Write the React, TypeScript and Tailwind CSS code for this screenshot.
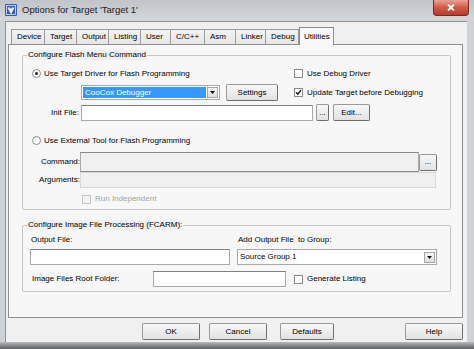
const tabs = [
  { name: "Device", w: "w-[34px]" },
  { name: "Target", w: "w-[32px]" },
  { name: "Output", w: "w-[32px]" },
  { name: "Listing", w: "w-[32px]" },
  { name: "User", w: "w-[30px]" },
  { name: "C/C++", w: "w-[34px]" },
  { name: "Asm", w: "w-[31px]" },
  { name: "Linker", w: "w-[30px]" },
  { name: "Debug", w: "w-[33px]" },
];

function CheckBox({ checked = false, disabled = false }: { checked?: boolean; disabled?: boolean }) {
  return (
    <span
      className={`flex h-[9px] w-[9px] shrink-0 items-center justify-center border ${
        disabled ? "border-[#c4c4c4] bg-[#f4f4f4]" : "border-[#8a8a8a] bg-white"
      }`}
    >
      {checked && (
        <svg width="7" height="7" viewBox="0 0 7 7">
          <path d="M1 3.2 L2.8 5.2 L6 1.2" fill="none" stroke="#1a1a1a" strokeWidth="1.4" />
        </svg>
      )}
    </span>
  );
}

function Radio({ checked = false }: { checked?: boolean }) {
  return (
    <span className="flex h-[9px] w-[9px] shrink-0 items-center justify-center rounded-full border border-[#8a8a8a] bg-white">
      {checked && <span className="h-[3px] w-[3px] rounded-full bg-[#222]" />}
    </span>
  );
}

function Button({ label, w, h = "h-[17px]" }: { label: string; w: string; h?: string }) {
  return (
    <div
      className={`${w} ${h} flex shrink-0 items-center justify-center rounded-[2px] border border-[#9a9a9a] border-b-[#6e6e6e] border-r-[#6e6e6e] bg-gradient-to-b from-[#f8f8f8] to-[#e2e2e2]`}
    >
      {label}
    </div>
  );
}

function ArrowBtn() {
  return (
    <div className="flex h-[11px] w-[11px] shrink-0 items-center justify-center border border-[#a8a8a8] bg-gradient-to-b from-[#f6f6f6] to-[#dedede]">
      <svg width="5" height="3" viewBox="0 0 5 3">
        <path d="M0 0 H5 L2.5 3 Z" fill="#111" />
      </svg>
    </div>
  );
}

function GroupBox({ title, h, children }: { title: string; h: string; children: React.ReactNode }) {
  return (
    <div className={`relative ${h} w-[429px] rounded-[2px] border border-[#c6c6c6]`}>
      <span className="absolute left-[4px] top-[-6px] bg-[#f0f0f0] px-[1px] leading-[10px]">{title}</span>
      {children}
    </div>
  );
}

export default function App() {
  return (
    <div
      className="flex h-[349px] w-[474px] flex-col overflow-hidden bg-[#cfd2d5] text-[8px] text-black"
      style={{ fontFamily: '"Liberation Sans", Arial, sans-serif' }}
    >
      {/* Title bar */}
      <div className="flex h-[21px] shrink-0 items-start bg-gradient-to-b from-[#c1c4c8] to-[#d4d7da] pl-[5px]">
        <div className="mt-[4px] flex h-[12px] w-[12px] items-center justify-center rounded-[1px] bg-[#2f5fb4]">
          <svg width="10" height="10" viewBox="0 0 10 10">
            <rect x="0.5" y="0.5" width="9" height="9" fill="none" stroke="#dfe8f7" strokeWidth="0.8" />
            <path d="M2 2.5 L5 8 L8 2.5 M3.5 2.5 L5 5.5 L6.5 2.5" fill="none" stroke="#fff" strokeWidth="1.1" />
          </svg>
        </div>
        <span className="ml-[5px] mt-[4px] text-[9.5px] leading-[12px] text-[#1c1c1c]">Options for Target 'Target 1'</span>
        <div className="ml-auto mr-[5px] flex h-[16px] w-[36px] items-center justify-center rounded-b-[4px] border border-t-0 border-[#7a2a22] bg-gradient-to-b from-[#e8a196] via-[#d05a48] to-[#b83a2a]">
          <svg width="8" height="7" viewBox="0 0 8 7">
            <path d="M1 0.5 L7 6.5 M7 0.5 L1 6.5" stroke="#fff" strokeWidth="1.8" />
          </svg>
        </div>
      </div>

      {/* Client area */}
      <div className="ml-[5px] mr-[7px] flex h-[321px] flex-col border-t border-l border-[#8f8f8f] bg-[#f0f0f0]">
        {/* Tabs */}
        <div className="mt-[5px] flex h-[17px] items-end pl-[5px]">
          {tabs.map((t, i) => (
            <div
              key={t.name}
              className={`${t.w} flex h-[15px] items-center border-t border-r border-[#9a9a9a] bg-gradient-to-b from-[#f2f2f2] to-[#e6e6e6] pl-[5px] ${
                i === 0 ? "border-l" : ""
              }`}
            >
              {t.name}
            </div>
          ))}
          <div className="relative z-10 mb-[-1px] flex h-[18px] w-[35px] items-start border-x border-t border-[#8a8a8a] bg-[#f8f8f8] pl-[4px] pt-[3px]">
            Utilities
          </div>
        </div>

        {/* Tab page */}
        <div className="ml-[2px] flex h-[274px] w-[455px] flex-col border border-[#8f8f8f] bg-[#f7f7f7] pl-[13px] pt-[10px]">
          <GroupBox title="Configure Flash Menu Command" h="h-[155px]">
            <div className="flex flex-col">
              <div className="mt-[12px] flex h-[11px] items-center pl-[9px]">
                <div className="flex w-[262px] items-center gap-[3px]">
                  <Radio checked />
                  <span>Use Target Driver for Flash Programming</span>
                </div>
                <div className="flex items-center gap-[4px]">
                  <CheckBox />
                  <span>Use Debug Driver</span>
                </div>
              </div>
              <div className="mt-[5px] flex h-[17px] items-center pl-[58px]">
                <div className="flex h-[15px] w-[139px] items-center border border-[#a9a9a9] bg-white pl-[1px] pr-[1px]">
                  <div className="flex h-[11px] flex-1 items-center bg-[#3399ff] pl-[2px] text-white">CooCox Debugger</div>
                  <div className="ml-[1px]">
                    <ArrowBtn />
                  </div>
                </div>
                <div className="ml-[6px]">
                  <Button label="Settings" w="w-[52px]" />
                </div>
                <div className="ml-[16px] flex items-center gap-[4px]">
                  <CheckBox checked />
                  <span>Update Target before Debugging</span>
                </div>
              </div>
              <div className="mt-[3px] flex h-[17px] items-center">
                <span className="w-[56px] text-right">Init File:</span>
                <div className="ml-[2px] h-[16px] w-[232px] border border-[#a9a9a9] border-t-[#7f7f7f] bg-white" />
                <div className="ml-[3px]">
                  <Button label="..." w="w-[13px]" />
                </div>
                <div className="ml-[4px]">
                  <Button label="Edit..." w="w-[37px]" />
                </div>
              </div>
              <div className="mt-[14px] flex h-[11px] items-center gap-[3px] pl-[9px]">
                <Radio />
                <span>Use External Tool for Flash Programming</span>
              </div>
              <div className="mt-[6px] flex h-[20px] items-center">
                <span className="w-[57px] text-right">Command:</span>
                <div className="h-[20px] w-[339px] border border-[#a9a9a9] border-t-[#8a8a8a] border-b-[#8a8a8a] bg-[#f0f0f0]" />
                <Button label="..." w="w-[18px]" />
              </div>
              <div className="flex h-[16px] items-center">
                <span className="w-[57px] text-right">Arguments:</span>
                <div className="h-[16px] w-[356px] border border-[#d8d8d8] bg-[#f0f0f0]" />
              </div>
              <div className="mt-[6px] flex h-[10px] items-center gap-[4px] pl-[59px] text-[#a3a3a3]">
                <CheckBox disabled />
                <span>Run Independent</span>
              </div>
            </div>
          </GroupBox>

          <div className="mt-[15px]">
            <GroupBox title="Configure Image File Processing (FCARM):" h="h-[67px]">
              <div className="flex flex-col">
                <div className="mt-[9px] flex h-[10px] items-center pl-[8px]">
                  <span className="w-[207px]">Output File:</span>
                  <span>Add Output File&nbsp; to Group:</span>
                </div>
                <div className="mt-[4px] flex h-[16px] items-center pl-[7px]">
                  <div className="h-[16px] w-[200px] border border-[#a9a9a9] border-t-[#7f7f7f] bg-white" />
                  <div className="ml-[7px] flex h-[16px] w-[200px] items-center border border-[#a9a9a9] bg-white pl-[2px] pr-[1px]">
                    <span className="flex-1">Source Group 1</span>
                    <ArrowBtn />
                  </div>
                </div>
                <div className="mt-[6px] flex h-[16px] items-center pl-[9px]">
                  <span className="w-[121px]">Image Files Root Folder:</span>
                  <div className="h-[16px] w-[133px] border border-[#a9a9a9] border-t-[#7f7f7f] bg-white" />
                  <div className="ml-[8px] flex items-center gap-[4px]">
                    <CheckBox />
                    <span>Generate Listing</span>
                  </div>
                </div>
              </div>
            </GroupBox>
          </div>
        </div>

        {/* Dialog buttons */}
        <div className="mt-[5px] flex h-[17px] items-center pl-[136px]">
          <Button label="OK" w="w-[58px]" />
          <div className="ml-[9px]">
            <Button label="Cancel" w="w-[58px]" />
          </div>
          <div className="ml-[13px]">
            <Button label="Defaults" w="w-[54px]" />
          </div>
          <div className="ml-[71px]">
            <Button label="Help" w="w-[58px]" />
          </div>
        </div>
      </div>

      {/* Bottom frame */}
      <div className="flex-1 bg-gradient-to-b from-[#b8bbbe] to-[#5e6063]" />
    </div>
  );
}
